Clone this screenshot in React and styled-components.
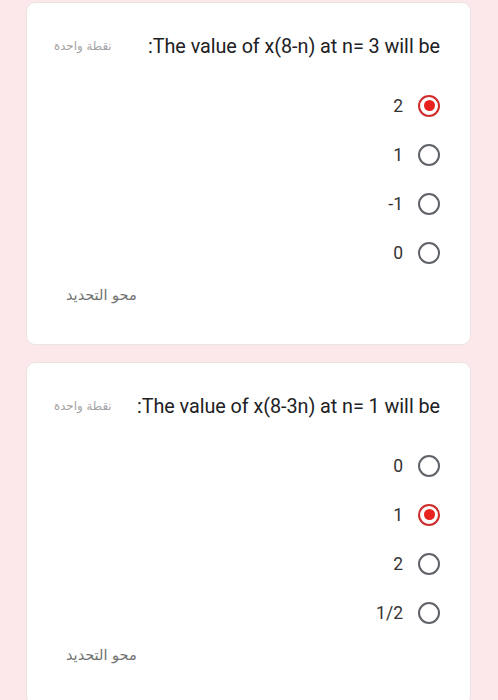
import React from "react";
import styled, { createGlobalStyle } from "styled-components";

const GlobalStyle = createGlobalStyle`
  html, body {
    margin: 0;
    padding: 0;
    background: #fce8eb;
  }
  body {
    font-family: Roboto, "Liberation Sans", sans-serif;
  }
`;

const Page = styled.div`
  padding: 2px 27px 0 26px;
  display: flex;
  flex-direction: column;
  gap: 17px;
  height: 700px;
  overflow: hidden;
  box-sizing: border-box;
`;

const Card = styled.div`
  background: #fff;
  border: 1px solid #ebe3e4;
  border-radius: 9px;
  height: 343px;
  flex-shrink: 0;
  box-sizing: border-box;
  display: flex;
  flex-direction: column;
`;

const QuestionRow = styled.div`
  display: flex;
  justify-content: space-between;
  align-items: center;
  height: 68px;
  padding: 9px 30px 1px 27px;
`;

const Points = styled.span`
  font-family: "DejaVu Sans", sans-serif;
  font-size: 11.8px;
  color: #a3a3a3;
`;

const Question = styled.span`
  font-size: 19.8px;
  color: #202124;
  letter-spacing: -0.05px;
`;

const Options = styled.div`
  display: flex;
  flex-direction: column;
  padding-right: 30px;
`;

const Option = styled.label`
  display: flex;
  justify-content: flex-end;
  align-items: center;
  gap: 15px;
  height: 49px;
`;

const OptionText = styled.span`
  font-size: 17.5px;
  color: #333;
`;

const Ring = styled.span`
  width: 22px;
  height: 22px;
  border-radius: 50%;
  box-sizing: border-box;
  border: 2px solid ${(p) => (p.checked ? "#cf2b2b" : "#5f6368")};
  display: flex;
  align-items: center;
  justify-content: center;
  &::after {
    content: "";
    width: 11px;
    height: 11px;
    border-radius: 50%;
    background: #e8231f;
    display: ${(p) => (p.checked ? "block" : "none")};
  }
`;

const Clear = styled.div`
  font-family: "DejaVu Sans", sans-serif;
  font-size: 14.5px;
  color: #6f6f6f;
  padding: 10px 0 0 39px;
`;

const questions = [
  {
    text: ":The value of x(8-n) at n= 3 will be",
    options: ["2", "1", "-1", "0"],
    checked: 0,
  },
  {
    text: ":The value of x(8-3n) at n= 1 will be",
    options: ["0", "1", "2", "1/2"],
    checked: 1,
  },
];

const App = () => {
  return (
    <>
      <GlobalStyle />
      <Page>
        {questions.map((q, i) => (
          <Card key={i}>
            <QuestionRow>
              <Points>نقطة واحدة</Points>
              <Question>{q.text}</Question>
            </QuestionRow>
            <Options>
              {q.options.map((o, j) => (
                <Option key={j}>
                  <OptionText>{o}</OptionText>
                  <Ring checked={j === q.checked} />
                </Option>
              ))}
            </Options>
            <Clear>محو التحديد</Clear>
          </Card>
        ))}
      </Page>
    </>
  );
};

export default App;
